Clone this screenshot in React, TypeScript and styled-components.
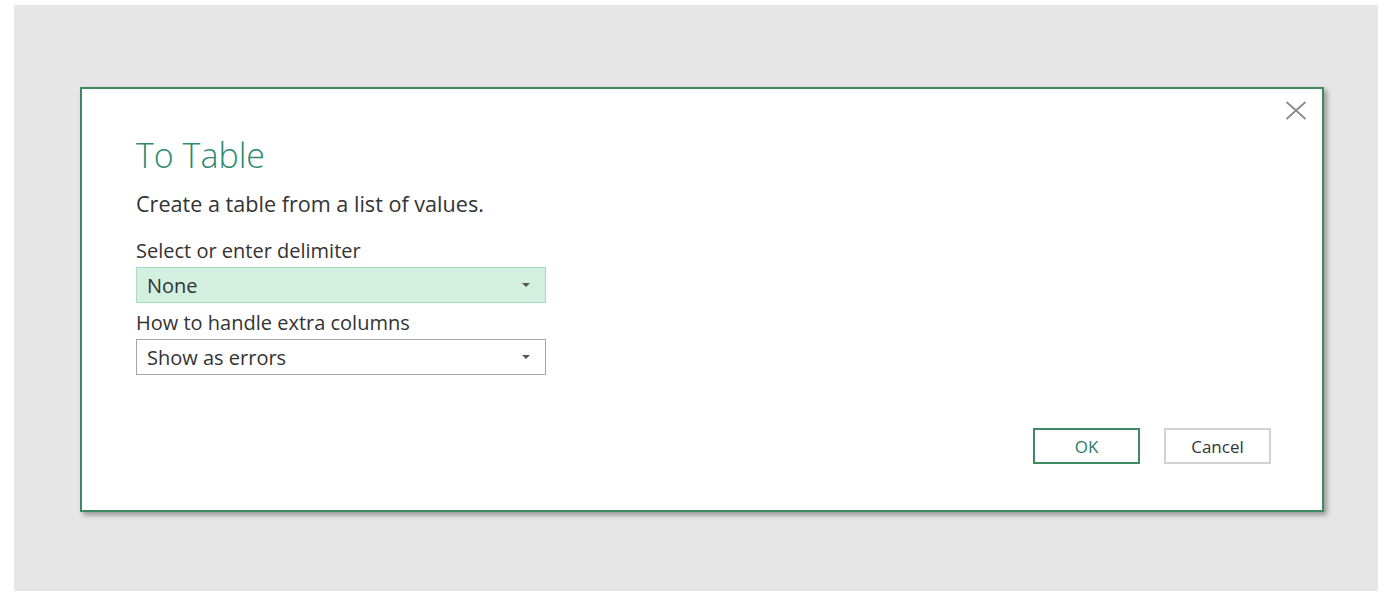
import React from "react";
import styled, { createGlobalStyle } from "styled-components";

const Global = createGlobalStyle`
  html, body { margin: 0; padding: 0; background: #ffffff; }
  body { font-family: "Open Sans", "Noto Sans", sans-serif; }
  * { box-sizing: border-box; }
`;

const Backdrop = styled.div`
  margin: 5px 0 0 14px;
  width: 1364px;
  height: 586px;
  background: #e6e6e6;
  padding: 82px 0 0 66px;
`;

const Dialog = styled.div`
  position: relative;
  width: 1244px;
  height: 425px;
  background: #ffffff;
  border: 2px solid #3f8a62;
  box-shadow: 3px 3px 5px rgba(0, 0, 0, 0.35);
  padding: 44px 51px 0 54px;
  display: flex;
  flex-direction: column;
`;

const Close = styled.button`
  position: absolute;
  top: 9px;
  right: 14px;
  width: 24px;
  height: 24px;
  padding: 0;
  border: none;
  background: transparent;
  display: flex;
  align-items: center;
  justify-content: center;
`;

const Title = styled.h1`
  margin: 0;
  font-family: "Open Sans", "Noto Sans", sans-serif;
  font-weight: 300;
  font-size: 34px;
  line-height: 44px;
  color: #2e8a70;
`;

const Description = styled.p`
  margin: 13px 0 0 0;
  font-size: 21.6px;
  line-height: 28px;
  color: #333333;
`;

const Field = styled.div<{ $top: number }>`
  display: flex;
  flex-direction: column;
  margin-top: ${(p) => p.$top}px;
`;

const Label = styled.label`
  font-size: 20px;
  line-height: 26px;
  color: #333333;
`;

const Select = styled.div<{ $active?: boolean }>`
  width: 410px;
  height: 36px;
  margin-top: 3px;
  display: flex;
  align-items: center;
  justify-content: space-between;
  padding: 0 15px 0 10px;
  font-size: 20px;
  color: #333333;
  background: ${(p) => (p.$active ? "#d3efe0" : "#ffffff")};
  border: 1px solid ${(p) => (p.$active ? "#a9dcc0" : "#a6a6a6")};
`;

const Caret = styled.span`
  width: 0;
  height: 0;
  border-left: 4.5px solid transparent;
  border-right: 4.5px solid transparent;
  border-top: 4.5px solid #555555;
`;

const Footer = styled.div`
  display: flex;
  justify-content: flex-end;
  gap: 24px;
  margin-top: 53px;
`;

const Button = styled.button<{ $primary?: boolean }>`
  width: 107px;
  height: 36px;
  background: #ffffff;
  border: 2px solid ${(p) => (p.$primary ? "#3f8a62" : "#d2d2d2")};
  font-family: "Open Sans", "Noto Sans", sans-serif;
  font-size: 17px;
  color: ${(p) => (p.$primary ? "#2f7a6a" : "#333333")};
  padding: 0;
`;

export default function App() {
  return (
    <>
      <Global />
      <Backdrop>
        <Dialog>
          <Close aria-label="Close">
            <svg width="22" height="19" viewBox="0 0 22 19">
              <path d="M1.5 1 L20.5 18 M20.5 1 L1.5 18" stroke="#8a8a8a" strokeWidth="1.8" fill="none" />
            </svg>
          </Close>
          <Title>To Table</Title>
          <Description>Create a table from a list of values.</Description>
          <Field $top={20}>
            <Label>Select or enter delimiter</Label>
            <Select $active>
              <span>None</span>
              <Caret />
            </Select>
          </Field>
          <Field $top={7}>
            <Label>How to handle extra columns</Label>
            <Select>
              <span>Show as errors</span>
              <Caret />
            </Select>
          </Field>
          <Footer>
            <Button $primary>OK</Button>
            <Button>Cancel</Button>
          </Footer>
        </Dialog>
      </Backdrop>
    </>
  );
}
